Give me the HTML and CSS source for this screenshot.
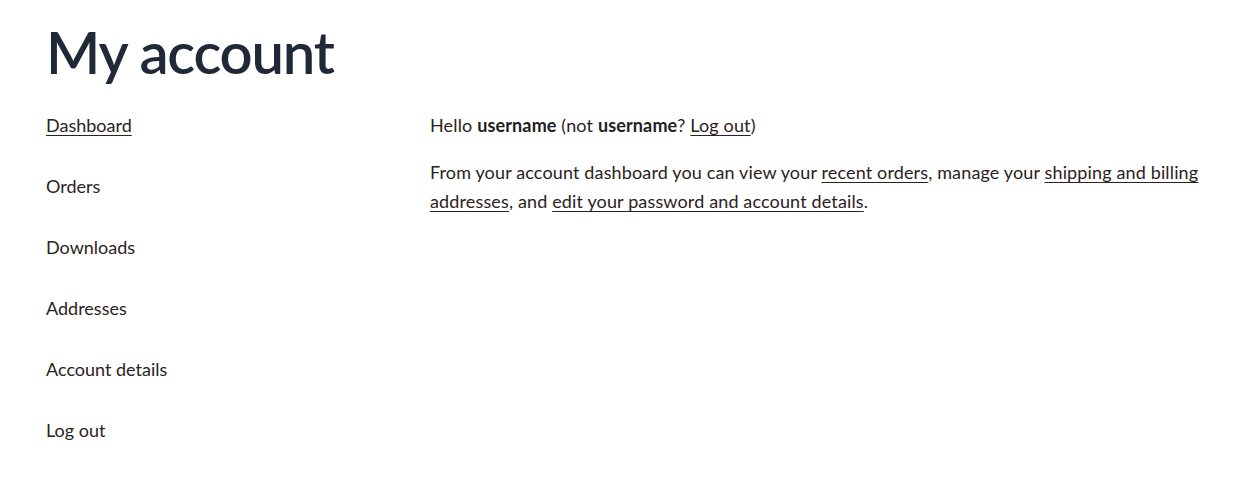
FILE: index.html
```html
<!DOCTYPE html>
<html lang="en">
<head>
  <meta charset="UTF-8">
  <meta name="viewport" content="width=device-width, initial-scale=1">
  <title>My account</title>
  <link rel="stylesheet" href="styles.css">
</head>
<body>
  <div class="page">
    <h1 class="page-title">My account</h1>

    <div class="account">
      <!-- NAVEGACIÓN -->
      <nav class="account-nav">
        <ul>
          <li class="active"><a href="#">Dashboard</a></li>
          <li><a href="#">Orders</a></li>
          <li><a href="#">Downloads</a></li>
          <li><a href="#">Addresses</a></li>
          <li><a href="#">Account details</a></li>
          <li><a href="#">Log out</a></li>
        </ul>
      </nav>

      <!-- CONTENIDO -->
      <div class="account-content">
        <p>Hello <strong>username</strong> (not <strong>username</strong>? <a href="#">Log out</a>)</p>
        <p>From your account dashboard you can view your <a href="#">recent orders</a>, manage your <a href="#">shipping and billing addresses</a>, and <a href="#">edit your password and account details</a>.</p>
      </div>
    </div>
  </div>
</body>
</html>
```

FILE: styles.css
```css
/* RESET Y GENERALES */
* { box-sizing: border-box; margin: 0; padding: 0; }
body {
  font-family: Lato, "Open Sans", sans-serif;
  background: #fff; color: #2b2220;
  font-size: 18px; line-height: 29px;
}
a { color: #2b2220; }

/* PÁGINA */
.page { padding: 14px 20px 0 46px; }
.page-title {
  font-size: 58px; line-height: 76px; font-weight: 600;
  color: #1f2937; letter-spacing: -1.2px;
}

/* CUENTA */
.account {
  display: grid; grid-template-columns: 384px 1fr;
  margin-top: 21px;
}
.account-nav ul { list-style: none; }
.account-nav li { margin-bottom: 32px; }
.account-nav a { text-decoration: none; }
.account-nav li.active a { text-decoration: underline; text-underline-offset: 3px; }

.account-content { letter-spacing: 0.14px; }
.account-content p { margin-bottom: 18px; }
.account-content strong { font-weight: 700; color: #1e1e24; }
.account-content a { text-underline-offset: 3px; text-decoration-thickness: 1px; }
```
